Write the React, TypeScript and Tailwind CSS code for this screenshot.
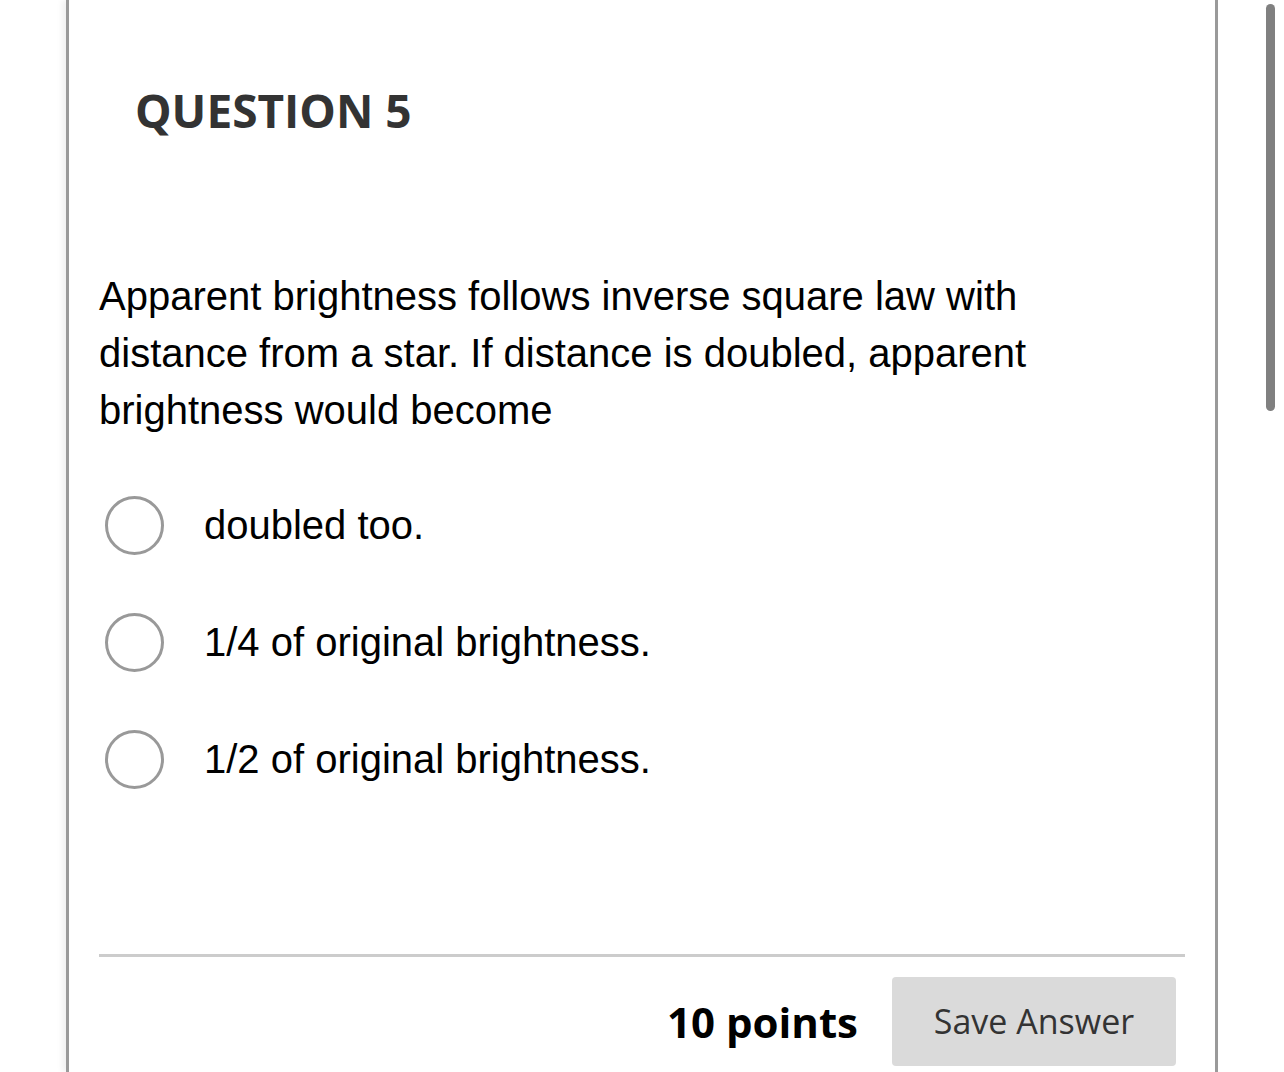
export default function App() {
  const options = ['doubled too.', '1/4 of original brightness.', '1/2 of original brightness.']

  return (
    <div className="relative h-[1072px] w-[1284px] overflow-hidden bg-white">
      <div className="ml-[66px] flex h-[1072px] w-[1152px] flex-col border-x-[3px] border-[#9a9a9a] bg-white pl-[30px] pr-[30px] shadow-[-4px_0_6px_rgba(0,0,0,0.06)]">
        <h2 className="mt-[80px] pl-[36px] font-['Open_Sans'] text-[46px] font-bold leading-[60px] text-[#333]">
          QUESTION 5
        </h2>

        <p className="mt-[128px] w-[1000px] font-['Liberation_Sans',Arial,sans-serif] text-[40px] leading-[57px] text-black">
          Apparent brightness follows inverse square law with distance from a star. If distance is doubled, apparent
          brightness would become
        </p>

        <div className="mt-[57px] flex flex-col gap-[58px]">
          {options.map((opt) => (
            <label key={opt} className="flex items-center">
              <span className="ml-[6px] h-[59px] w-[59px] rounded-full border-[3px] border-[#999]" />
              <span className="ml-[40px] font-['Liberation_Sans',Arial,sans-serif] text-[40px] leading-[59px] text-black">
                {opt}
              </span>
            </label>
          ))}
        </div>

        <div className="mt-[165px] h-[3px] w-[1086px] bg-[#cccccc]" />

        <div className="mt-[20px] flex items-center justify-end pr-[9px]">
          <span className="font-['Open_Sans'] text-[42px] font-bold text-black">10 points</span>
          <button className="ml-[34px] h-[89px] w-[284px] rounded-[4px] bg-[#dadada] font-['Open_Sans'] text-[34px] text-[#333]">
            Save Answer
          </button>
        </div>
      </div>

      <div className="absolute left-[1266px] top-[4px] h-[407px] w-[9px] rounded-full bg-[#808080]" />
    </div>
  )
}
